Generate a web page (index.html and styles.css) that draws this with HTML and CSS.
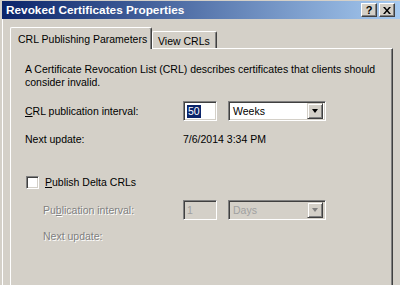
FILE: index.html
```html
<!DOCTYPE html>
<html lang="en">
<head>
  <meta charset="UTF-8" />
  <title>Revoked Certificates Properties</title>
  <link rel="stylesheet" href="styles.css">
</head>
<body>
  <div class="window">
    <div class="titlebar">
      <span class="title">Revoked Certificates Properties</span>
      <div class="caption-btns">
        <span class="cap-btn help">?</span>
        <span class="cap-btn close">
          <svg width="8" height="7" viewBox="0 0 8 7"><path d="M0 0h2l2 2.5L6 0h2L5 3.5 8 7H6L4 4.5 2 7H0l3-3.5z" fill="#000"/></svg>
        </span>
      </div>
    </div>

    <div class="dialog-body">
      <div class="tabs">
        <div class="tab active">CRL Publishing Parameters</div>
        <div class="tab">View CRLs</div>
      </div>

      <div class="page">
        <p class="desc">A Certificate Revocation List (CRL) describes certificates that clients should consider invalid.</p>

        <div class="row row-interval">
          <span class="label"><u>C</u>RL publication interval:</span>
          <span class="edit"><span class="sel">50</span></span>
          <span class="combo"><span class="combo-text">Weeks</span><span class="combo-arrow"></span></span>
        </div>

        <div class="row row-next">
          <span class="label">Next update:</span>
          <span class="value">7/6/2014 3:34 PM</span>
        </div>

        <div class="row row-check">
          <span class="checkbox"></span>
          <span><u>P</u>ublish Delta CRLs</span>
        </div>

        <div class="row row-sub row-sub-interval disabled">
          <span class="label">Pu<u>b</u>lication interval:</span>
          <span class="edit">1</span>
          <span class="combo"><span class="combo-text">Days</span><span class="combo-arrow"></span></span>
        </div>

        <div class="row row-sub row-sub-next disabled">
          <span class="label">Next update:</span>
        </div>
      </div>
    </div>
  </div>
</body>
</html>
```

FILE: styles.css
```css
body {
  margin: 0;
  background: #d4d0c8;
  font-family: 'Liberation Sans', Arial, sans-serif;
  font-size: 10.5px;
  color: #000;
  overflow: hidden;
}

.window {
  height: 285px;
  padding: 1px 0 0 1px;
  border-left: 1px solid #d4d0c8;
  box-sizing: border-box;
}

.titlebar {
  height: 18px;
  display: flex;
  align-items: center;
  justify-content: space-between;
  padding: 0 5px 0 4px;
  background: linear-gradient(to right, #0a246a, #a6caf0);
}

.title {
  color: #fff;
  font-weight: bold;
  font-size: 11.8px;
}

.caption-btns {
  display: flex;
  gap: 2px;
}

.cap-btn {
  width: 16px;
  height: 14px;
  box-sizing: border-box;
  background: #d4d0c8;
  border-top: 1px solid #fff;
  border-left: 1px solid #fff;
  border-right: 1px solid #404040;
  border-bottom: 1px solid #404040;
  box-shadow: inset -1px -1px #808080;
  display: flex;
  align-items: center;
  justify-content: center;
  font-weight: bold;
  font-size: 11px;
  line-height: 1;
}

.dialog-body {
  border-left: 1px solid #fff;
  padding: 8px 0 0 7px;
  height: 266px;
  box-sizing: border-box;
}

.tabs {
  display: flex;
  align-items: flex-end;
  height: 21px;
  position: relative;
  z-index: 1;
}

.tab {
  box-sizing: border-box;
  height: 17px;
  padding: 1px 6px 0 5px;
  display: flex;
  align-items: center;
  white-space: nowrap;
  border-top: 1px solid #fff;
  border-left: 1px solid #fff;
  border-right: 1px solid #404040;
  box-shadow: inset -1px 0 #808080;
  border-radius: 2px 2px 0 0;
}

.tab.active {
  height: 22px;
  width: 142px;
  padding-left: 7px;
  margin-bottom: -1px;
  background: #d4d0c8;
}

.page {
  width: 383px;
  height: 240px;
  box-sizing: border-box;
  border-top: 1px solid #fff;
  border-left: 1px solid #fff;
  border-right: 1px solid #404040;
  box-shadow: inset -1px 0 #808080;
  padding: 14px 0 0 14px;
}

.desc {
  margin: 0;
  line-height: 13px;
  width: 360px;
}

.row {
  display: flex;
  align-items: center;
}

.label {
  width: 158px;
  flex-shrink: 0;
}

.row-interval {
  height: 20px;
  margin-top: 12px;
}

.row-next {
  height: 16px;
  margin-top: 10px;
}

.row-check {
  height: 16px;
  margin-top: 27px;
  gap: 6px;
}

.row-sub {
  padding-left: 18px;
}

.row-sub .label {
  width: 140px;
}

.row-sub-interval {
  height: 20px;
  margin-top: 10px;
}

.row-sub-next {
  height: 16px;
  margin-top: 8px;
}

.edit, .combo, .checkbox {
  box-sizing: border-box;
  background: #fff;
  border-top: 1px solid #808080;
  border-left: 1px solid #808080;
  border-right: 1px solid #fff;
  border-bottom: 1px solid #fff;
  box-shadow: inset 1px 1px #404040, inset -1px -1px #d4d0c8;
}

.edit {
  width: 34px;
  height: 20px;
  padding: 0 3px;
  display: flex;
  align-items: center;
}

.sel {
  background: #0a246a;
  color: #fff;
  padding: 0 1px;
  line-height: 13px;
}

.combo {
  width: 98px;
  height: 20px;
  margin-left: 11px;
  display: flex;
  align-items: center;
  justify-content: space-between;
  padding: 2px 2px 2px 4px;
}

.combo-arrow {
  width: 16px;
  height: 16px;
  box-sizing: border-box;
  background: #d4d0c8;
  border-top: 1px solid #d4d0c8;
  border-left: 1px solid #d4d0c8;
  border-right: 1px solid #404040;
  border-bottom: 1px solid #404040;
  box-shadow: inset 1px 1px #fff, inset -1px -1px #808080;
  position: relative;
}

.combo-arrow::after {
  content: "";
  position: absolute;
  left: 4px;
  top: 5px;
  border-left: 3.5px solid transparent;
  border-right: 3.5px solid transparent;
  border-top: 4px solid #000;
}

.checkbox {
  width: 13px;
  height: 13px;
  margin-left: 1px;
}

.disabled {
  color: #808080;
  text-shadow: 1px 1px 0 #fff;
}

.disabled .edit, .disabled .combo {
  background: #d4d0c8;
  color: #a0a0a0;
  text-shadow: none;
}

.disabled .combo-arrow::after {
  border-top-color: #808080;
}
```
